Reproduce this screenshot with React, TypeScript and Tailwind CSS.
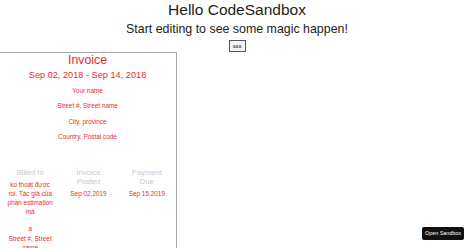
import React from "react";

export default function App() {
  return (
    <div className="relative h-[248px] w-[474px] overflow-hidden bg-white font-['Liberation_Sans',Arial,sans-serif] text-[#222]">
      <div className="flex flex-col items-center">
        <h1 className="text-[15.5px] leading-[20px] font-normal">Hello CodeSandbox</h1>
        <h2 className="mt-[2px] text-[12.4px] leading-[14px] font-normal">Start editing to see some magic happen!</h2>
        <button className="mt-[4px] flex h-[12px] w-[17px] items-center justify-center border border-[#555] bg-[#f4f4f4] text-[5px] leading-none text-[#333]">
          aaa
        </button>
      </div>

      <div className="-ml-[2px] w-[179px] border border-[#a8a8a8] text-center text-[#ec2b2b]">
        <div className="text-[12.3px] leading-[14px]">Invoice</div>
        <div className="mt-[2px] text-[9.2px] leading-[13px]">Sep 02, 2018 - Sep 14, 2018</div>
        <div className="mt-[4.5px] flex flex-col gap-[7.5px] text-[6.4px] leading-[8px]">
          <div>Your name</div>
          <div>Street #, Street name</div>
          <div>City, province</div>
          <div>Country, Postal code</div>
        </div>
        <div className="ml-[2px] mt-[26.5px] grid grid-cols-3">
          <div className="px-[6px]">
            <div className="px-[3px] text-[7.6px] leading-[9.5px] text-[#c9c9c9]">Billed to</div>
            <div className="mt-[2.6px] text-[6.4px] leading-[9.3px]">
              ko thoát được rồi. Tác giả của phần estimation mà
            </div>
            <div className="mt-[7.7px] text-[6.4px] leading-[9.3px]">a</div>
            <div className="text-[6.4px] leading-[9.3px]">Street #, Street name</div>
          </div>
          <div className="px-[6px]">
            <div className="px-[3px] text-[7.6px] leading-[9.5px] text-[#c9c9c9]">Invoice Posted</div>
            <div className="mt-[2.6px] text-[6.4px] leading-[9.3px]">Sep 02,2019</div>
          </div>
          <div className="px-[6px]">
            <div className="px-[3px] text-[7.6px] leading-[9.5px] text-[#c9c9c9]">Payment Due</div>
            <div className="mt-[2.6px] text-[6.4px] leading-[9.3px]">Sep 15,2019</div>
          </div>
        </div>
      </div>

      <button className="absolute bottom-[8px] right-[10px] flex h-[13px] w-[42px] items-center justify-center rounded-[2px] bg-[#111] text-[5.4px] leading-none text-white">
        Open Sandbox
      </button>
    </div>
  );
}
